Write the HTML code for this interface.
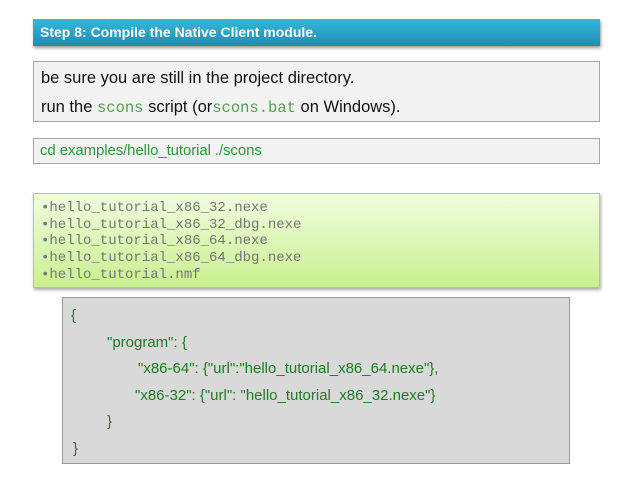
<!DOCTYPE html><html><head><style>
body{margin:0;width:638px;height:478px;background:#fff;position:relative;font-family:"Liberation Sans",sans-serif;overflow:hidden}
.a{position:absolute;box-sizing:border-box}
.hd{left:33px;top:19px;width:567px;height:27px;background:linear-gradient(#39b6dc,#1e8db2);box-shadow:1px 2px 3px #999;color:#fff;font-weight:bold;font-size:14px;line-height:27px;padding-left:7px}
.b1{left:33px;top:61px;width:567px;height:61px;background:#f2f2f2;border:1px solid #a6a6a6;font-size:16.5px;color:#111;padding-left:7px}
.m{font-family:"Liberation Mono",monospace;color:#55a050;font-size:15.5px}
.b2{left:33px;top:138px;width:567px;height:26px;background:#f2f2f2;border:1px solid #a6a6a6;color:#2a9a3a;font-size:15px;line-height:24px;padding-left:6px;letter-spacing:-0.1px}
.g{left:33px;top:193px;width:567px;height:95px;background:linear-gradient(#f0fde0,#c9f08e);border:1px solid #b7c98a;box-shadow:1px 2px 3px #aaa;font-family:"Liberation Mono",monospace;font-size:14px;color:#777;line-height:16.7px;padding:6px 0 0 7px}
.gr{left:62px;top:297px;width:508px;height:167px;background:#d9d9d9;border:1px solid #9a9a9a;color:#1d7d22;font-size:15px;letter-spacing:0}
.gr div{position:absolute;white-space:nowrap}
</style></head><body>
<div class="a hd">Step 8: Compile the Native Client module.</div>
<div class="a b1"><div style="position:absolute;top:7px;left:7px">be sure you are still in the project directory.</div><div style="position:absolute;top:36px;left:7px;white-space:nowrap">run the <span class="m">scons</span> script (or<span class="m">scons.bat</span> on Windows).</div></div>
<div class="a b2">cd examples/hello_tutorial ./scons</div>
<div class="a g">•hello_tutorial_x86_32.nexe<br>•hello_tutorial_x86_32_dbg.nexe<br>•hello_tutorial_x86_64.nexe<br>•hello_tutorial_x86_64_dbg.nexe<br>•hello_tutorial.nmf</div>
<div class="a gr">
<div style="left:8px;top:9px">{</div>
<div style="left:44px;top:36px">"program": {</div>
<div style="left:75px;top:62px">"x86-64": {"url":"hello_tutorial_x86_64.nexe"},</div>
<div style="left:72px;top:89px">"x86-32": {"url": "hello_tutorial_x86_32.nexe"}</div>
<div style="left:44px;top:115px">}</div>
<div style="left:10px;top:142px">}</div>
</div>
</body></html>
